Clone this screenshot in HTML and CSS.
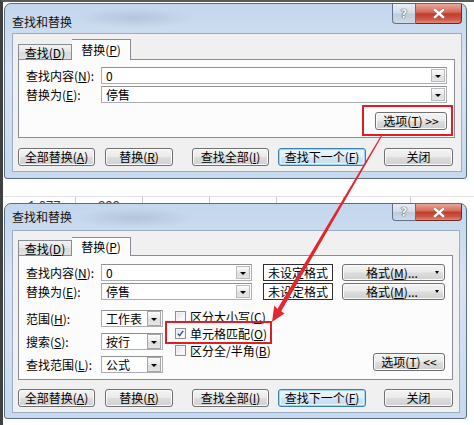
FILE: index.html
```html
<!DOCTYPE html>
<html lang="zh-CN">
<head>
<meta charset="utf-8">
<title>查找和替换</title>
<link rel="stylesheet" href="styles.css">
</head>
<body>
<main class="screen">

  <!-- compact dialog: replace tab, options collapsed -->
  <section class="dlg dlg-compact">
    <header class="caption">
      <span class="caption-title">查找和替换</span>
      <div class="caption-btns">
        <span class="cbtn cbtn-help">?</span>
        <span class="cbtn cbtn-close"><svg class="x-glyph" viewBox="0 0 14 11"><path d="M3 2 L11 9 M11 2 L3 9"/></svg></span>
      </div>
    </header>
    <div class="frame">
      <div class="client">
        <div class="tabs">
          <span class="tab">查找(<u>D</u>)</span>
          <span class="tab tab-active">替换(<u>P</u>)</span>
        </div>
        <div class="panel">
          <div class="row">
            <span class="lbl">查找内容(<u>N</u>):</span>
            <div class="combo combo-long"><span class="val">0</span><span class="drop"></span></div>
          </div>
          <div class="row">
            <span class="lbl">替换为(<u>E</u>):</span>
            <div class="combo combo-long"><span class="val">停售</span><span class="drop"></span></div>
          </div>
          <div class="opt-line">
            <button class="btn btn-opt">选项(<u>T</u>) &gt;&gt;</button>
          </div>
        </div>
        <div class="actions">
          <button class="btn b-all">全部替换(<u>A</u>)</button>
          <button class="btn b-rep">替换(<u>R</u>)</button>
          <button class="btn b-findall">查找全部(<u>I</u>)</button>
          <button class="btn b-next is-focused">查找下一个(<u>F</u>)</button>
          <button class="btn b-close">关闭</button>
        </div>
      </div>
    </div>
  </section>

  <!-- worksheet behind the dialogs -->
  <div class="sheet">
    <div class="sheet-row">
      <span class="cell c1">1,077</span>
      <span class="cell c2">200</span>
      <span class="cell"></span>
      <span class="cell"></span>
      <span class="cell"></span>
      <span class="cell"></span>
      <span class="cell"></span>
    </div>
  </div>

  <!-- expanded dialog: all options shown -->
  <section class="dlg dlg-full">
    <header class="caption">
      <span class="caption-title">查找和替换</span>
      <div class="caption-btns">
        <span class="cbtn cbtn-help">?</span>
        <span class="cbtn cbtn-close"><svg class="x-glyph" viewBox="0 0 14 11"><path d="M3 2 L11 9 M11 2 L3 9"/></svg></span>
      </div>
    </header>
    <div class="frame">
      <div class="client">
        <div class="tabs">
          <span class="tab">查找(<u>D</u>)</span>
          <span class="tab tab-active">替换(<u>P</u>)</span>
        </div>
        <div class="panel">
          <div class="row">
            <span class="lbl">查找内容(<u>N</u>):</span>
            <div class="combo combo-mid"><span class="val">0</span><span class="drop"></span></div>
            <span class="fmt-tag">未设定格式</span>
            <button class="btn btn-fmt"><span class="fmt-text">格式(<u>M</u>)...</span><span class="mini-tri"></span></button>
          </div>
          <div class="row">
            <span class="lbl">替换为(<u>E</u>):</span>
            <div class="combo combo-mid"><span class="val">停售</span><span class="drop"></span></div>
            <span class="fmt-tag">未设定格式</span>
            <button class="btn btn-fmt"><span class="fmt-text">格式(<u>M</u>)...</span><span class="mini-tri"></span></button>
          </div>
          <div class="lower">
            <div class="fields">
              <span class="lbl">范围(<u>H</u>):</span>
              <div class="combo select"><span class="val">工作表</span><span class="drop drop-tall"></span></div>
              <span class="lbl">搜索(<u>S</u>):</span>
              <div class="combo select"><span class="val">按行</span><span class="drop drop-tall"></span></div>
              <span class="lbl">查找范围(<u>L</u>):</span>
              <div class="combo select"><span class="val">公式</span><span class="drop drop-tall"></span></div>
            </div>
            <div class="checks">
              <label class="chk"><span class="box"></span>区分大小写(<u>C</u>)</label>
              <label class="chk"><span class="box"><svg viewBox="0 0 11 11"><path d="M2.2 5.6 L4.4 8.2 L8.8 2.4"/></svg></span>单元格匹配(<u>O</u>)</label>
              <label class="chk"><span class="box"></span>区分全/半角(<u>B</u>)</label>
            </div>
            <button class="btn btn-opt btn-opt-low">选项(<u>T</u>) &lt;&lt;</button>
          </div>
        </div>
        <div class="actions">
          <button class="btn b-all">全部替换(<u>A</u>)</button>
          <button class="btn b-rep">替换(<u>R</u>)</button>
          <button class="btn b-findall">查找全部(<u>I</u>)</button>
          <button class="btn b-next is-focused">查找下一个(<u>F</u>)</button>
          <button class="btn b-close">关闭</button>
        </div>
      </div>
    </div>
  </section>
</main>

<!-- red callouts drawn over both dialogs -->
<svg class="annot" viewBox="0 0 474 425" width="474" height="425">
  <rect x="363" y="106" width="89" height="29" class="callout"/>
  <rect x="166" y="322" width="105" height="21" class="callout"/>
  <polygon class="pointer" points="382.5,135.3 281.2,311.2 284.4,313.5 272,322 274.3,305.4 277.4,308.9 381.5,134.7"/>
</svg>
</body>
</html>
```

FILE: styles.css
```css
* { box-sizing: border-box; }

html, body { margin: 0; }

body {
  position: relative;
  width: 474px;
  height: 425px;
  overflow: hidden;
  background: #ffffff;
  font-family: "Noto Sans CJK SC", "Noto Sans", sans-serif;
  font-size: 12px;
  color: #000;
}

u { text-decoration: underline; text-underline-offset: 1px; }

.screen {
  height: 425px;
  border-left: 3px solid #404040;
  border-top: 2px solid #5a5a5a;
  display: flex;
  flex-direction: column;
}

/* ---------- window frame ---------- */
.dlg {
  width: 463px;
  margin-left: 1px;
  border: 1px solid #5a6d84;
  border-radius: 7px 7px 3px 3px;
  background:
    radial-gradient(ellipse 60px 10px at 130px 14px, rgba(120,140,165,.25), transparent),
    linear-gradient(to bottom, #c3d6ec 0%, #d6e4f4 35%, #cfdff1 70%, #c6d9ee 100%);
  display: flex;
  flex-direction: column;
  flex: none;
}
.dlg-compact { margin-top: 1px; height: 176px; }
.dlg-full { height: 216px; }

.caption {
  display: flex;
  justify-content: space-between;
  align-items: flex-start;
  padding-left: 7px;
  flex: none;
}
.dlg-compact .caption { height: 29px; }
.dlg-full .caption { height: 26px; }

.caption-title { line-height: 14px; color: #111; }
.dlg-compact .caption-title { padding-top: 11px; }
.dlg-full .caption-title { padding-top: 6px; }

.caption-btns { display: flex; margin-right: 4px; }

.cbtn {
  display: flex;
  align-items: center;
  justify-content: center;
  border: 1px solid #617187;
  border-top: none;
}
.dlg-compact .cbtn { height: 20px; }
.dlg-full .cbtn { height: 17px; }

.cbtn-help {
  width: 24px;
  border-radius: 0 0 0 4px;
  background: linear-gradient(to bottom, #e6edf6 0%, #d2dde9 48%, #bccbdc 52%, #cfdbe8 100%);
  color: #f6f6f6;
  font-family: "DejaVu Sans", sans-serif;
  font-weight: bold;
  font-size: 12px;
  text-shadow: 0 0 1px #2d3a4a, 0 0 1px #2d3a4a;
}

.cbtn-close {
  width: 46px;
  border-left: none;
  border-color: #6b2a22;
  border-radius: 0 0 4px 0;
  background: linear-gradient(to bottom, #e9a699 0%, #d46c5d 42%, #c13d2d 52%, #cd5646 80%, #e08b7c 100%);
}

.x-glyph { width: 14px; height: 11px; }
.x-glyph path {
  fill: none;
  stroke: #fff;
  stroke-width: 2.6;
  stroke-linecap: square;
  paint-order: stroke;
  filter: drop-shadow(0 0 0.6px #3a1410);
}

.frame {
  flex: 1;
  display: flex;
  padding: 0 6px 6px 7px;
}

.client {
  flex: 1;
  display: flex;
  flex-direction: column;
  border: 1px solid #9aadc4;
  background: #f0f0f0;
  padding: 5px 6px 5px 5px;
}
.dlg-full .client { padding-top: 6px; }

/* ---------- tabs ---------- */
.tabs {
  display: flex;
  align-items: flex-end;
  height: 21px;
  margin-bottom: -1px;
  position: relative;
  z-index: 1;
  flex: none;
}
.dlg-full .tabs { height: 19px; }

.tab {
  height: 15px;
  margin-bottom: 1px;
  width: 54px;
  border: 1px solid #898c95;
  border-bottom: none;
  background: linear-gradient(to bottom, #f2f2f2, #e6e6e6 50%, #dadada 50%, #e2e2e2);
  display: flex;
  align-items: center;
  justify-content: center;
  line-height: 13px;
  white-space: nowrap;
}

.tab-active {
  width: 59px;
  height: 100%;
  margin-bottom: 0;
  border-left: none;
  background: #fcfcfc;
  padding-bottom: 2px;
}

.panel {
  border: 1px solid #898c95;
  background: #fcfcfc;
  padding: 7px 7px 7px 7px;
  flex: none;
}
.dlg-full .panel { padding-top: 8px; padding-bottom: 6px; }

.row {
  display: flex;
  align-items: center;
  height: 17px;
}
.row + .row { margin-top: 2px; }

.lbl { width: 75px; flex: none; white-space: nowrap; line-height: 14px; }

.combo {
  display: flex;
  align-items: center;
  height: 17px;
  border: 1px solid #abadb3;
  border-top-color: #8e9196;
  background: #fff;
  flex: none;
}
.combo-long { width: 346px; }
.combo-mid { width: 151px; }
.select { width: 62px; }

.val { flex: 1; padding-left: 4px; line-height: 14px; white-space: nowrap; }

.drop {
  width: 14px;
  height: 13px;
  margin-right: 1px;
  border: 1px solid #b9b9b9;
  background: linear-gradient(to bottom, #fbfbfb, #e9e9e9 50%, #dcdcdc 51%, #e6e6e6);
  display: flex;
  align-items: center;
  justify-content: center;
  flex: none;
}
.drop::after {
  content: "";
  border-left: 3px solid transparent;
  border-right: 3px solid transparent;
  border-top: 3px solid #000;
  margin-top: 1px;
}
.drop-tall { height: 15px; border-color: #a6a6a6; }

.opt-line {
  display: flex;
  justify-content: flex-end;
  margin-top: 9px;
}

/* ---------- push buttons ---------- */
.btn {
  height: 18px;
  padding: 0;
  border: 1px solid #707070;
  border-radius: 3px;
  background: linear-gradient(to bottom, #f3f3f3 0%, #ebebeb 48%, #dddddd 52%, #d0d0d0 100%);
  box-shadow: inset 0 0 0 1px #fbfbfb;
  font: inherit;
  color: #000;
  line-height: 14px;
  white-space: nowrap;
  flex: none;
}

.btn-opt { width: 72px; }

.actions {
  display: flex;
  margin-top: 10px;
  flex: none;
}
.dlg-full .actions { margin-top: 9px; }

.b-all { width: 77px; }
.b-rep { width: 68px; margin-left: 10px; }
.b-findall { width: 77px; margin-left: 19px; }
.b-next { width: 88px; margin-left: 9px; }
.b-close { width: 69px; margin-left: 18px; }

.is-focused {
  border-color: #3c7fb1;
  box-shadow: inset 0 0 0 1px #9fd5f2, inset 0 0 0 2px #e3f3fb;
  background: linear-gradient(to bottom, #eef6fb 0%, #e2eff8 48%, #d2e5f2 52%, #c6ddee 100%);
}

/* ---------- format pickers ---------- */
.fmt-tag {
  width: 70px;
  height: 17px;
  margin-left: 11px;
  border: 1px solid #2f2f2f;
  background: #fff;
  display: flex;
  align-items: center;
  justify-content: center;
  line-height: 14px;
  flex: none;
}

.btn-fmt {
  width: 103px;
  height: 17px;
  margin-left: 9px;
  display: flex;
  align-items: center;
}
.fmt-text { flex: 1; text-align: center; padding-left: 6px; }
.mini-tri {
  border-left: 2px solid transparent;
  border-right: 2px solid transparent;
  border-top: 3px solid #000;
  margin-right: 5px;
}

/* ---------- search options ---------- */
.lower {
  display: flex;
  margin-top: 10px;
  height: 63px;
}

.fields {
  display: grid;
  grid-template-columns: 75px 62px;
  grid-auto-rows: 17px;
  row-gap: 6px;
  align-items: center;
}

.checks {
  display: flex;
  flex-direction: column;
  margin-left: 12px;
  margin-top: -2px;
}

.chk {
  height: 17px;
  display: flex;
  align-items: center;
  line-height: 14px;
  white-space: nowrap;
}

.box {
  width: 11px;
  height: 11px;
  margin-right: 4px;
  border: 1px solid #8f8f8f;
  background: linear-gradient(135deg, #dcdcdc, #f6f6f6 60%, #ffffff);
  box-shadow: inset 0 0 0 1px #f4f4f4;
  display: flex;
}
.box svg { width: 9px; height: 9px; }
.box path {
  fill: none;
  stroke: #2d4c90;
  stroke-width: 1.6;
}

.btn-opt-low {
  margin-left: auto;
  align-self: flex-end;
  margin-bottom: 2px;
}

/* ---------- worksheet strip ---------- */
.sheet {
  height: 24px;
  display: flex;
  align-items: flex-end;
  flex: none;
}

.sheet-row {
  display: flex;
  height: 7px;
  width: 100%;
  overflow: hidden;
  border-top: 1px solid #e2e2e2;
}

.cell {
  width: 67px;
  flex: none;
  border-right: 1px solid #c8c8c8;
  padding-top: 2px;
  font-family: "Liberation Sans", sans-serif;
  font-size: 13px;
  line-height: 13px;
  color: #333;
}
.cell.c1 { width: 73px; padding-left: 25px; }
.cell.c2 { padding-left: 22px; }

/* ---------- callouts ---------- */
.annot {
  position: absolute;
  left: 0;
  top: 0;
  pointer-events: none;
}
.callout { fill: none; stroke: #e01d27; stroke-width: 2; }
.pointer { fill: #e3252f; }
```
